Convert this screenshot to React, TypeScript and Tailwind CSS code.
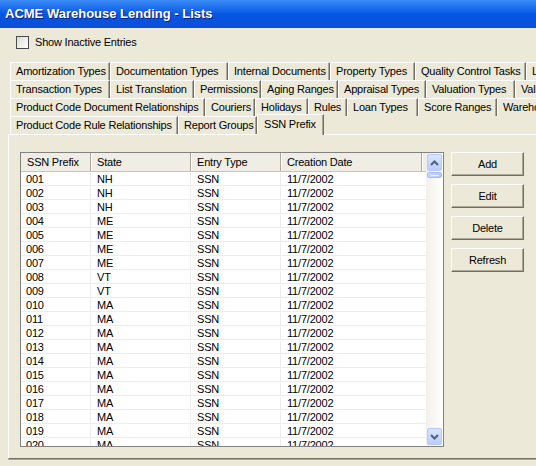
import React from "react";

type Tab = { label: string; w: number };

const TAB_ROWS: Tab[][] = [
  [
    { label: "Amortization Types", w: 100 },
    { label: "Documentation Types", w: 118 },
    { label: "Internal Documents", w: 102 },
    { label: "Property Types", w: 85 },
    { label: "Quality Control Tasks", w: 111 },
    { label: "Lending Types", w: 90 },
  ],
  [
    { label: "Transaction Types", w: 100 },
    { label: "List Translation", w: 84 },
    { label: "Permissions", w: 67 },
    { label: "Aging Ranges", w: 77 },
    { label: "Appraisal Types", w: 88 },
    { label: "Valuation Types", w: 89 },
    { label: "Valuation", w: 80 },
  ],
  [
    { label: "Product Code Document Relationships", w: 195 },
    { label: "Couriers", w: 50 },
    { label: "Holidays", w: 53 },
    { label: "Rules", w: 39 },
    { label: "Loan Types", w: 71 },
    { label: "Score Ranges", w: 79 },
    { label: "Warehouses", w: 80 },
  ],
];

const STATES: [string, string][] = [
  ["001", "NH"], ["002", "NH"], ["003", "NH"],
  ["004", "ME"], ["005", "ME"], ["006", "ME"], ["007", "ME"],
  ["008", "VT"], ["009", "VT"],
  ["010", "MA"], ["011", "MA"], ["012", "MA"], ["013", "MA"], ["014", "MA"],
  ["015", "MA"], ["016", "MA"], ["017", "MA"], ["018", "MA"], ["019", "MA"], ["020", "MA"],
];

function TabItem({ label, w }: Tab) {
  return (
    <div
      style={{ width: w }}
      className="h-[18px] shrink-0 flex items-center pl-[5px] border-t border-l border-white border-r border-r-[#716f64] shadow-[inset_-1px_0_0_#aca899] whitespace-nowrap overflow-hidden"
    >
      {label}
    </div>
  );
}

function Button({ label }: { label: string }) {
  return (
    <button className="w-[73px] h-[24px] flex items-center justify-center bg-[#ece9d8] border border-white border-r-[#716f64] border-b-[#716f64] shadow-[inset_-1px_-1px_0_#aca899] text-black">
      {label}
    </button>
  );
}

const COLS = [
  { name: "SSN Prefix", w: 70 },
  { name: "State", w: 100 },
  { name: "Entry Type", w: 90 },
  { name: "Creation Date", w: 141 },
];

export default function App() {
  return (
    <div className="w-[536px] h-[466px] overflow-hidden bg-[#ece9d8] text-[11px] tracking-[-0.2px] text-black font-['Liberation_Sans',Arial,sans-serif] select-none">
      {/* title bar */}
      <div className="h-[28px] flex items-center pl-[5px] bg-linear-to-b from-[#3b8cf8] via-[#0556e4] to-[#0a4fd5] text-white font-bold text-[13px] tracking-normal [text-shadow:1px_1px_0_#0f1f7a]">
        ACME Warehouse Lending - Lists
      </div>

      <div className="flex items-center gap-[6px] mt-[8px] ml-[16px] h-[13px]">
        <div className="w-[13px] h-[13px] border border-[#4a4a4a] bg-linear-to-br from-[#dcdcd6] to-white" />
        <span>Show Inactive Entries</span>
      </div>

      {/* tabs */}
      <div className="mt-[13px] pl-[10px]">
        {TAB_ROWS.map((row, i) => (
          <div key={i} className="flex">
            {row.map((t) => (
              <TabItem key={t.label} {...t} />
            ))}
          </div>
        ))}
        <div className="flex items-end h-[18px]">
          <TabItem label="Product Code Rule Relationships" w={168} />
          <TabItem label="Report Groups" w={79} />
          <div className="relative z-10 -mb-[1px] w-[67px] h-[21px] shrink-0 flex items-center pl-[6px] pb-[2px] bg-[#ece9d8] border-t border-l border-white border-r border-r-[#716f64] shadow-[inset_-1px_0_0_#aca899] whitespace-nowrap">
            SSN Prefix
          </div>
        </div>
      </div>

      {/* panel */}
      <div className="ml-[8px] h-[325px] border-t border-l border-white border-b border-b-[#716f64] shadow-[0_1px_0_#aca899] flex gap-[7px] pl-[11px] pt-[17px]">
        <div className="w-[424px] h-[295px] border border-[#828282] bg-white flex overflow-hidden">
          <div className="flex-1 flex flex-col overflow-hidden">
            <div className="h-[19px] flex shrink-0 bg-[#efede4] border-b border-[#c7c5b2]">
              {COLS.map((c) => (
                <div
                  key={c.name}
                  style={{ width: c.w }}
                  className="h-full flex items-center pl-[6px] border-r border-[#aca899] shadow-[1px_0_0_white] whitespace-nowrap"
                >
                  {c.name}
                </div>
              ))}
            </div>
            <div className="overflow-hidden">
              {STATES.map(([p, s]) => (
                <div key={p} className="h-[14px] flex border-b border-[#ededed] leading-[13px] pt-[1px]">
                  <div className="w-[70px] pl-[5px] border-r border-[#ededed]">{p}</div>
                  <div className="w-[100px] pl-[6px] border-r border-[#ededed]">{s}</div>
                  <div className="w-[90px] pl-[6px] border-r border-[#ededed]">SSN</div>
                  <div className="w-[141px] pl-[6px]">11/7/2002</div>
                </div>
              ))}
            </div>
          </div>
          {/* scrollbar */}
          <div className="w-[17px] flex flex-col bg-linear-to-r from-[#f3f1ec] to-[#fefefb]">
            <div className="h-[17px] m-[1px] mb-0 rounded-[2px] bg-linear-to-b from-[#dae6fe] to-[#b8cdf9] border border-[#b6c8f3] flex items-center justify-center">
              <svg width="9" height="6" viewBox="0 0 9 6">
                <path d="M1 5 L4.5 1.5 L8 5" stroke="#4d6185" strokeWidth="2" fill="none" />
              </svg>
            </div>
            <div className="h-[6px] mx-[1px] mt-[1px] rounded-[2px] bg-linear-to-r from-[#c6d6fc] to-[#b5c9f7] border border-[#a6bdf3] flex items-center justify-center">
              <div className="w-[8px] h-px bg-[#eef3fe]" />
            </div>
            <div className="flex-1" />
            <div className="h-[17px] m-[1px] mt-0 rounded-[2px] bg-linear-to-b from-[#dae6fe] to-[#b8cdf9] border border-[#b6c8f3] flex items-center justify-center">
              <svg width="9" height="6" viewBox="0 0 9 6">
                <path d="M1 1 L4.5 4.5 L8 1" stroke="#4d6185" strokeWidth="2" fill="none" />
              </svg>
            </div>
          </div>
        </div>

        <div className="flex flex-col gap-[8px]">
          <Button label="Add" />
          <Button label="Edit" />
          <Button label="Delete" />
          <Button label="Refresh" />
        </div>
      </div>
    </div>
  );
}
